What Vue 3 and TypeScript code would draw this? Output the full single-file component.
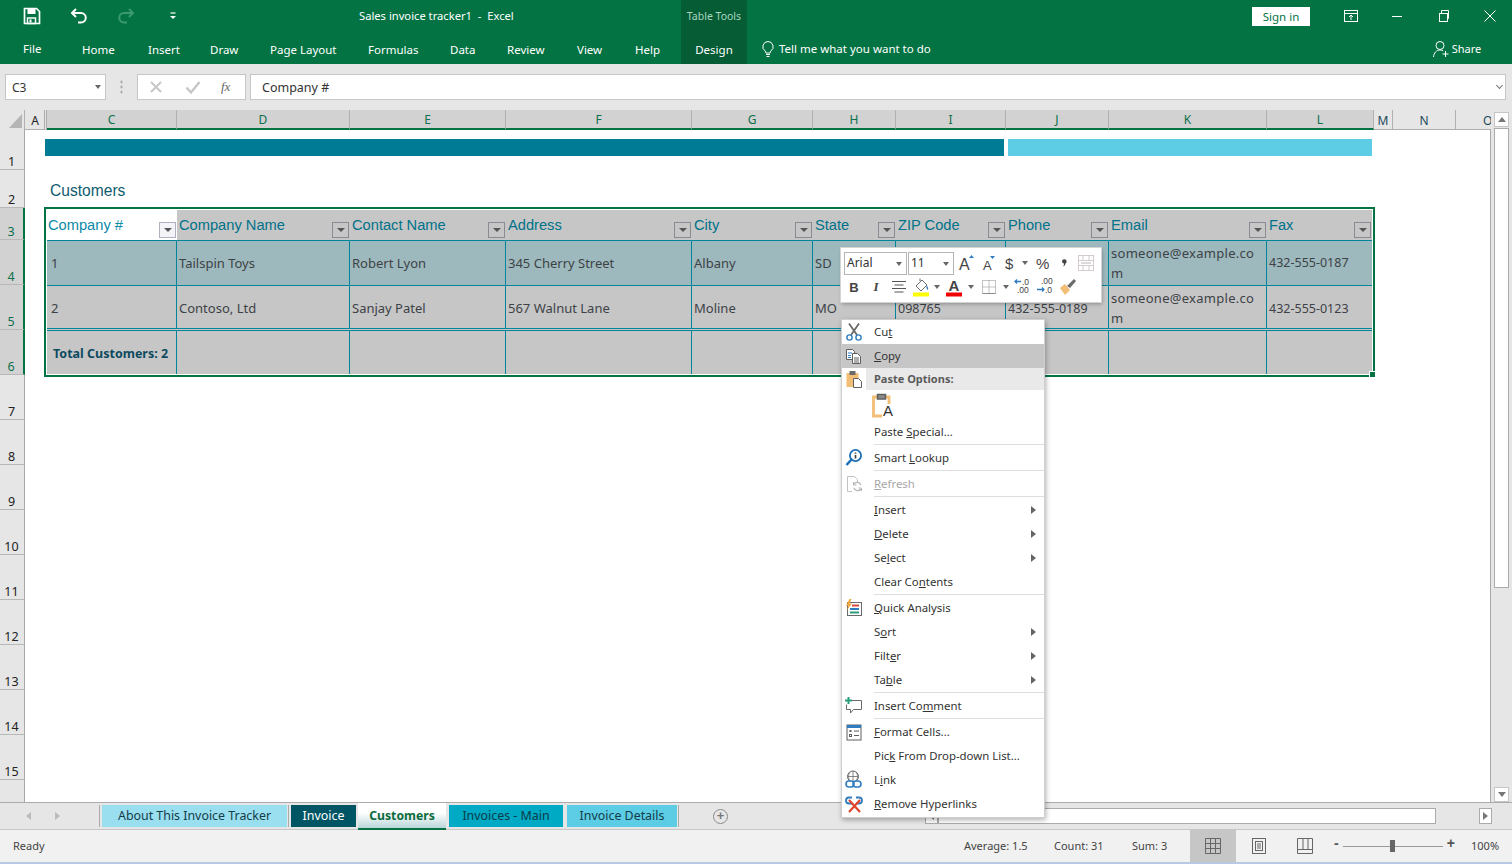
<script setup lang="ts">
type MenuEntry = { kind: "item" | "sep" | "head" | "paste"; t?: string; u?: number; icon?: string; sub?: boolean; on?: boolean; off?: boolean };

const ribbonTabs = [
  { name: "Home", w: 66 }, { name: "Insert", w: 62 }, { name: "Draw", w: 60 }, { name: "Page Layout", w: 98 },
  { name: "Formulas", w: 82 }, { name: "Data", w: 57 }, { name: "Review", w: 70 }, { name: "View", w: 58 }, { name: "Help", w: 46 },
];

const columns = [
  { name: "C", w: 130, on: true },
  { name: "D", w: 173, on: true },
  { name: "E", w: 156, on: true },
  { name: "F", w: 186, on: true },
  { name: "G", w: 121, on: true },
  { name: "H", w: 83, on: true },
  { name: "I", w: 110, on: true },
  { name: "J", w: 103, on: true },
  { name: "K", w: 158, on: true },
  { name: "L", w: 107, on: true },
  { name: "M", w: 19, on: false },
  { name: "N", w: 63, on: false },
];

const rows = [
  { n: 1, h: 40 }, { n: 2, h: 38 }, { n: 3, h: 32, on: true }, { n: 4, h: 45, on: true }, { n: 5, h: 45, on: true },
  { n: 6, h: 45, on: true }, { n: 7, h: 45 }, { n: 8, h: 45 }, { n: 9, h: 45 }, { n: 10, h: 45 }, { n: 11, h: 45 },
  { n: 12, h: 45 }, { n: 13, h: 45 }, { n: 14, h: 45 }, { n: 15, h: 45 },
];

const headers = ["Company #", "Company Name", "Contact Name", "Address", "City", "State", "ZIP Code", "Phone", "Email", "Fax"];
const customers = [
  ["1", "Tailspin Toys", "Robert Lyon", "345 Cherry Street", "Albany", "SD", "", "", "someone@example.co\nm", "432-555-0187"],
  ["2", "Contoso, Ltd", "Sanjay Patel", "567 Walnut Lane", "Moline", "MO", "098765", "432-555-0189", "someone@example.co\nm", "432-555-0123"],
];

const menu: MenuEntry[] = [
  { kind: "item", t: "Cut", u: 2, icon: "cut" },
  { kind: "item", t: "Copy", u: 0, icon: "copy", on: true },
  { kind: "head", t: "Paste Options:", icon: "paste" },
  { kind: "paste" },
  { kind: "item", t: "Paste Special...", u: 6 },
  { kind: "sep" },
  { kind: "item", t: "Smart Lookup", u: 6, icon: "lookup" },
  { kind: "sep" },
  { kind: "item", t: "Refresh", u: 0, icon: "refresh", off: true },
  { kind: "sep" },
  { kind: "item", t: "Insert", u: 0, sub: true },
  { kind: "item", t: "Delete", u: 0, sub: true },
  { kind: "item", t: "Select", u: 2, sub: true },
  { kind: "item", t: "Clear Contents", u: 8 },
  { kind: "sep" },
  { kind: "item", t: "Quick Analysis", u: 0, icon: "quick" },
  { kind: "item", t: "Sort", u: 1, sub: true },
  { kind: "item", t: "Filter", u: 4, sub: true },
  { kind: "item", t: "Table", u: 2, sub: true },
  { kind: "sep" },
  { kind: "item", t: "Insert Comment", u: 9, icon: "comment" },
  { kind: "sep" },
  { kind: "item", t: "Format Cells...", u: 0, icon: "format" },
  { kind: "item", t: "Pick From Drop-down List...", u: 3 },
  { kind: "item", t: "Link", u: 1, icon: "link" },
  { kind: "item", t: "Remove Hyperlinks", u: 0, icon: "unlink" },
];

const sheets = [
  { name: "About This Invoice Tracker", w: 185, cls: "s-about" },
  { name: "Invoice", w: 65, cls: "s-invoice" },
  { name: "Customers", w: 88, cls: "s-active" },
  { name: "Invoices - Main", w: 114, cls: "s-main" },
  { name: "Invoice Details", w: 110, cls: "s-details" },
];

const F = 'font-family="Liberation Sans, sans-serif"';
const icons: Record<string, string> = {
  save: '<path d="M2.500 2.500h12l3 3v12h-15z" fill="none" stroke="#fff" stroke-width="1.700"/><rect x="5.500" y="3" width="8" height="5" fill="#fff"/><rect x="5.500" y="12" width="8" height="5.500" fill="none" stroke="#fff" stroke-width="1.500"/><rect x="7.500" y="13.500" width="2" height="3" fill="#fff"/>',
  undo: '<path d="M7 3L3 7l4 4" fill="none" stroke="#fff" stroke-width="2"/><path d="M3.500 7H12a4.500 4.500 0 0 1 0 9.500H9" fill="none" stroke="#fff" stroke-width="2"/>',
  redo: '<path d="M13 3l4 4-4 4" fill="none" stroke="#3c9a6f" stroke-width="2"/><path d="M16.500 7H8a4.500 4.500 0 0 0 0 9.500h3" fill="none" stroke="#3c9a6f" stroke-width="2"/>',
  more: '<path d="M7.500 7h5" stroke="#fff" stroke-width="1.200"/><path d="M7 10h6l-3 3z" fill="#fff"/>',
  display: '<rect x="3.500" y="4.500" width="13" height="11" fill="none" stroke="#fff"/><path d="M3.500 7.500h13" stroke="#fff"/><path d="M10 14V9M8 11l2-2 2 2" fill="none" stroke="#fff"/>',
  min: '<path d="M5 10.500h10" stroke="#fff"/>',
  restore: '<rect x="5.500" y="7.500" width="8" height="8" fill="none" stroke="#fff"/><path d="M7.500 7V4.500h7v8H14" fill="none" stroke="#fff"/>',
  close: '<path d="M4.500 4.500l11 11M15.500 4.500l-11 11" stroke="#fff" stroke-width="1"/>',
  bulb: '<path d="M10 2.500a5.200 5.200 0 0 0-3 9.400c.7.6.9 1.300.9 2.100h4.200c0-.8.2-1.500.9-2.100a5.200 5.200 0 0 0-3-9.400z" fill="none" stroke="#fff"/><path d="M8 15.500h4M8.500 17.500h3" stroke="#fff"/>',
  share: '<circle cx="9" cy="6.500" r="4" fill="none" stroke="#fff"/><path d="M2.500 18c.4-4 2.800-7 6.500-7 1.200 0 2.200.3 3 .8" fill="none" stroke="#fff"/><path d="M14.500 12v6M11.500 15h6" stroke="#fff"/>',
  x: '<path d="M5 5l10 10M15 5L5 15" stroke="#c6c6c6" stroke-width="2"/>',
  check: '<path d="M3.500 10.500l4.500 5L16.500 5" fill="none" stroke="#c6c6c6" stroke-width="2.400"/>',
  corner: '<path d="M13 1v14H0z" fill="#b5b5b5"/>',
  cut: '<path d="M5 1.500l8 11.500M15 1.500L7 13" stroke="#6a6a6a" stroke-width="1.800"/><circle cx="5.500" cy="15.500" r="2.600" fill="none" stroke="#2f7cc0" stroke-width="1.400"/><circle cx="14.500" cy="15.500" r="2.600" fill="none" stroke="#2f7cc0" stroke-width="1.400"/>',
  copy: '<path d="M2.500 3.500h6l2 2v8h-8z" fill="#fff" stroke="#5f5f5f"/><path d="M8.500 7.500h5l3 3v7h-8z" fill="#fff" stroke="#5f5f5f"/><path d="M4 7h4M4 9.500h3M4 11.500h3" stroke="#2f7cc0"/><path d="M10 12h5M10 14h5M10 16h5" stroke="#5f5f5f"/>',
  paste: '<rect x="2.500" y="4" width="12" height="14" fill="#f2bd75"/><rect x="5.500" y="2" width="6" height="4" fill="#6a6a6a"/><path d="M9.500 9.500h5l3 3v6h-8z" fill="#fff" stroke="#5f5f5f"/>',
  lookup: '<circle cx="11.500" cy="7.500" r="5.600" fill="#fff" stroke="#1f6fb5" stroke-width="1.800"/><path d="M7.500 11.500L2.500 17" stroke="#1f6fb5" stroke-width="2.600"/><path d="M11.500 4.500v1.300M11.500 7v3.600" stroke="#3f3f3f" stroke-width="1.600"/>',
  refresh: '<path d="M3.500 2.500h7l3 3v3M8 17.500H3.500v-15" fill="none" stroke="#c2c2c2"/><path d="M17 11a4 4 0 0 0-7-1M10 14a4 4 0 0 0 7 1" fill="none" stroke="#b5b5b5" stroke-width="1.300"/><path d="M9.500 8v3h3M17.500 17v-3h-3" fill="none" stroke="#b5b5b5"/>',
  quick: '<rect x="3.500" y="4.500" width="14" height="13" fill="none" stroke="#6a6a6a"/><rect x="8" y="6.500" width="7" height="2" fill="#d24a3c"/><rect x="6" y="10" width="9" height="2" fill="#2f7cc0"/><rect x="6" y="13.500" width="9" height="2" fill="#2a9d7c"/><path d="M5.500 1L2 7.500h2.500L3 12l5-6.500H5.500L7.500 1z" fill="#f0a83c"/>',
  comment: '<path d="M6.500 4.500h11v9h-8l-3 3.500v-3.500h-4v-5" fill="none" stroke="#6a6a6a"/><path d="M4.500 1v7M1 4.500h7" stroke="#2a9d7c" stroke-width="2"/>',
  format: '<rect x="3" y="3" width="14" height="15" fill="#fff" stroke="#5f5f5f"/><rect x="3" y="3" width="14" height="3" fill="#2f7cc0"/><rect x="5.500" y="8" width="2" height="2" fill="#5f5f5f"/><rect x="5.500" y="12.500" width="2" height="2" fill="none" stroke="#5f5f5f"/><path d="M10 9h5M10 13.500h5" stroke="#5f5f5f"/>',
  link: '<circle cx="9" cy="6.500" r="5.500" fill="#fff" stroke="#6a6a6a"/><path d="M3.500 6.500h11M9 1v11M6 2c-2 3-2 6 0 9M12 2c2 3 2 6 0 9" fill="none" stroke="#6a6a6a" stroke-width=".8"/><rect x="2" y="11" width="8" height="6" rx="3" fill="#fff" stroke="#2f7cc0" stroke-width="1.600"/><rect x="9" y="11" width="8" height="6" rx="3" fill="none" stroke="#2f7cc0" stroke-width="1.600"/>',
  unlink: '<path d="M8 3.500H5a3 3 0 0 0 0 6h3M12 3.500h3a3 3 0 0 1 0 6h-3" fill="none" stroke="#2f7cc0" stroke-width="1.800"/><path d="M5 6l11 12M16 6L5 18" stroke="#e0452c" stroke-width="2.200"/>',
  pasteA: '<path d="M6 4H1.500v19H10" fill="none" stroke="#f2bd75" stroke-width="2.800"/><path d="M13 4h4v7" fill="none" stroke="#f2bd75" stroke-width="2.800"/><rect x="5.500" y="1.500" width="8" height="4.500" fill="#8a8a8a" stroke="#5f5f5f" stroke-width="1.500"/><text x="11" y="23" font-size="15" ' + F + ' fill="#333">A</text>',
  grow: '<text x="3" y="17" font-size="16" ' + F + ' fill="#444">A</text><path d="M13 5h5l-2.500-3z" fill="#2f7cc0"/>',
  shrink: '<text x="4" y="17" font-size="13" ' + F + ' fill="#444">A</text><path d="M11 3h5l-2.500 3z" fill="#2f7cc0"/>',
  dollar: '<text x="5" y="16" font-size="15" ' + F + ' fill="#444">$</text>',
  percent: '<text x="3" y="16" font-size="15" ' + F + ' fill="#444">%</text>',
  comma: '<path d="M8 8.500a2.300 2.300 0 1 1 3.500 2c-.3 1.500-1 2.500-2.300 3 .5-1 .8-1.700.8-3A2.300 2.300 0 0 1 8 8.500z" fill="#444"/>',
  wrap: '<rect x="2.500" y="2.500" width="15" height="15" fill="none" stroke="#d3cbcf"/><path d="M2.500 7.500h15M2.500 12.500h15M7 2.500v5M13 2.500v5M7 12.500v5M13 12.500v5" stroke="#d3cbcf"/><path d="M5 10h10" stroke="#bdb5b9"/>',
  align: '<path d="M3 4.500h14M5.500 8h9M3 11.500h14M5.500 15h9" stroke="#555" stroke-width="1.100"/>',
  fill: '<path d="M5 9l6-6 5 5-6 6z" fill="#fff" stroke="#6a6a6a"/><path d="M9 4V1.500" stroke="#6a6a6a"/><path d="M15.500 8.500c1.500 1 2 3 1.500 4.500-1-.5-2-2-1.500-4.500z" fill="#2f7cc0"/><rect x="2" y="15.500" width="16" height="4" fill="#ffff00"/>',
  color: '<text x="4.500" y="13.500" font-size="15" font-weight="bold" ' + F + ' fill="#444">A</text><rect x="2" y="15.500" width="16" height="4" fill="#f00000"/>',
  borders: '<path d="M3.500 3.500h13v13h-13zM10 3.500v13M3.500 10h13" fill="none" stroke="#8a8a8a" stroke-dasharray="1 1"/><path d="M3.500 16.500h13" stroke="#8a8a8a"/>',
  decUp: '<path d="M9 4.500H3M5 2.500l-2 2 2 2" fill="none" stroke="#2f7cc0" stroke-width="1.300"/><text x="10" y="8" font-size="8.500" ' + F + ' fill="#444">.0</text><text x="5" y="16" font-size="8.500" ' + F + ' fill="#444">.00</text>',
  decDown: '<text x="6" y="7" font-size="8.500" ' + F + ' fill="#444">.00</text><path d="M2 12.500h7M7 10.500l2 2-2 2" fill="none" stroke="#2f7cc0" stroke-width="1.300"/><text x="10" y="16" font-size="8.500" ' + F + ' fill="#444">.0</text>',
  brush: '<path d="M2 11l5 7 5-5-5-6z" fill="#f2bd75"/><path d="M9 9l7-7 2 2-6 7z" fill="#6a6a6a"/>',
  viewNormal: '<path d="M2.500 2.500h15v15h-15zM7.500 2.500v15M12.500 2.500v15M2.500 7.500h15M2.500 12.500h15" fill="none" stroke="#666"/>',
  viewPage: '<rect x="3.500" y="2.500" width="13" height="15" fill="none" stroke="#666"/><rect x="6.500" y="5.500" width="7" height="9" fill="none" stroke="#666"/><path d="M8 8h4M8 10h4M8 12h4" stroke="#666"/>',
  viewBreak: '<path d="M2.500 2.500h15v15h-15zM2.500 13.500h15M8 2.500v11M13 2.500v11" fill="none" stroke="#666"/>',
};

const barTop = [
  { icon: "grow", w: 24 }, { icon: "shrink", w: 22 }, { icon: "dollar", w: 20 }, { w: 10 },
  { icon: "percent", w: 26 }, { icon: "comma", w: 16 }, { icon: "wrap", w: 28 },
];
const barBottom = [
  { text: "B", w: 20 }, { text: "I", w: 24 }, { icon: "align", w: 22 }, { icon: "fill", w: 22 }, { w: 10 },
  { icon: "color", w: 24 }, { w: 10 }, { icon: "borders", w: 25 }, { w: 9 }, { icon: "decUp", w: 24 },
  { icon: "decDown", w: 22 }, { icon: "brush", w: 24 },
];

function before(e: MenuEntry) {
  return e.u === undefined ? e.t : e.t!.slice(0, e.u);
}
function after(e: MenuEntry) {
  return e.u === undefined ? "" : e.t!.slice(e.u + 1);
}
</script>

<template>
  <div class="app">
    <header class="ribbon">
      <div class="titlebar">
        <div class="qat">
          <svg class="ic" viewBox="0 0 20 20" v-html="icons.save"></svg>
          <svg class="ic" viewBox="0 0 20 20" v-html="icons.undo"></svg>
          <svg class="ic" viewBox="0 0 20 20" v-html="icons.redo"></svg>
          <svg class="ic" viewBox="0 0 20 20" v-html="icons.more"></svg>
        </div>
        <div class="doc">Sales invoice tracker1&nbsp; - &nbsp;Excel</div>
      </div>
      <div class="context">Table Tools</div>
      <div class="winbar">
        <button class="signin">Sign in</button>
        <svg class="ic" viewBox="0 0 20 20" v-html="icons.display"></svg>
        <svg class="ic" viewBox="0 0 20 20" v-html="icons.min"></svg>
        <svg class="ic" viewBox="0 0 20 20" v-html="icons.restore"></svg>
        <svg class="ic" viewBox="0 0 20 20" v-html="icons.close"></svg>
      </div>
      <nav class="tabs">
        <span class="file">File</span>
        <span v-for="t in ribbonTabs" :key="t.name" :style="{ width: t.w + 'px' }">{{ t.name }}</span>
      </nav>
      <div class="design">Design</div>
      <div class="tell">
        <svg class="ic" viewBox="0 0 20 20" v-html="icons.bulb"></svg>
        <span>Tell me what you want to do</span>
        <svg class="ic share" viewBox="0 0 20 20" v-html="icons.share"></svg>
        <span class="sharetxt">Share</span>
      </div>
    </header>

    <section class="formula">
      <div class="namebox">C3<i class="caret"></i></div>
      <div class="grip"></div>
      <div class="fbtns">
        <svg class="ic" viewBox="0 0 20 20" v-html="icons.x"></svg>
        <svg class="ic" viewBox="0 0 20 20" v-html="icons.check"></svg>
        <em>fx</em>
      </div>
      <div class="finput">Company #<span class="chev"></span></div>
    </section>

    <section class="sheet">
      <div class="main">
        <div class="colhead">
          <div class="corner"><svg viewBox="0 0 13 15" v-html="icons.corner"></svg></div>
          <div class="col cola">A</div>
          <div v-for="c in columns" :key="c.name" class="col" :class="{ on: c.on }" :style="{ width: c.w + 'px' }">{{ c.name }}</div>
          <div class="col clip">O</div>
        </div>
        <div class="body">
          <div class="rowhead">
            <div v-for="r in rows" :key="r.n" class="rw" :class="{ on: r.on }" :style="{ height: r.h + 'px' }">{{ r.n }}</div>
            <div class="rw rest"></div>
          </div>
          <div class="canvas">
            <div class="banner"><div class="dark"></div><div class="light"></div></div>
            <div class="heading">Customers</div>
            <div class="table">
              <div class="tr thead">
                <div v-for="(h, i) in headers" :key="h" class="th" :class="{ active: i === 0 }">{{ h }}<span class="filter"></span></div>
              </div>
              <div v-for="(row, ri) in customers" :key="ri" class="tr" :class="ri === 0 ? 'r1' : 'r2'">
                <div v-for="(v, i) in row" :key="i" class="td" :class="{ first: i === 0, num: i === 6 || i === 7 || i === 9, mail: i === 8 }">{{ v }}</div>
              </div>
              <div class="tr total">
                <div class="td totaltxt">Total Customers: 2</div>
                <div v-for="i in 9" :key="i" class="td"></div>
              </div>
              <span class="handle"></span>
            </div>
          </div>
        </div>
      </div>
      <div class="vscroll">
        <div class="sbtn"><i class="tri up"></i></div>
        <div class="thumb"></div>
        <div class="sbtn"><i class="tri down"></i></div>
      </div>
    </section>

    <section class="sheettabs">
      <div class="nav"><i class="tri left"></i><i class="tri right"></i></div>
      <div v-for="s in sheets" :key="s.name" class="stab" :class="s.cls" :style="{ width: s.w + 'px' }">{{ s.name }}</div>
      <div class="plus">+</div>
      <div class="hscroll">
        <div class="hb"><i class="tri left"></i></div>
        <div class="hthumb"></div>
        <div class="hb end"><i class="tri right"></i></div>
      </div>
    </section>

    <footer class="status">
      <span class="ready">Ready</span>
      <span class="stat s1">Average: 1.5</span>
      <span class="stat s2">Count: 31</span>
      <span class="stat s3">Sum: 3</span>
      <div class="vb on"><svg class="ic" viewBox="0 0 20 20" v-html="icons.viewNormal"></svg></div>
      <div class="vb"><svg class="ic" viewBox="0 0 20 20" v-html="icons.viewPage"></svg></div>
      <div class="vb"><svg class="ic" viewBox="0 0 20 20" v-html="icons.viewBreak"></svg></div>
      <div class="zoom">
        <b>-</b>
        <div class="track"><i></i></div>
        <b>+</b>
      </div>
      <span class="pct">100%</span>
    </footer>

    <div class="minibar">
      <div class="barrow">
        <div class="combo font">Arial<i class="caret"></i></div>
        <div class="combo size">11<i class="caret"></i></div>
        <div v-for="(b, i) in barTop" :key="i" class="slot" :style="{ width: b.w + 'px' }">
          <svg v-if="b.icon" class="ic" viewBox="0 0 20 20" v-html="icons[b.icon]"></svg>
          <i v-else class="caret"></i>
        </div>
      </div>
      <div class="barrow second">
        <div v-for="(b, i) in barBottom" :key="i" class="slot" :style="{ width: b.w + 'px' }">
          <svg v-if="b.icon" class="ic" viewBox="0 0 20 20" v-html="icons[b.icon]"></svg>
          <span v-else-if="b.text" class="fmt" :class="b.text">{{ b.text }}</span>
          <i v-else class="caret"></i>
        </div>
      </div>
    </div>

    <div class="menu">
      <template v-for="(e, i) in menu" :key="i">
        <div v-if="e.kind === 'sep'" class="sep"></div>
        <div v-else-if="e.kind === 'paste'" class="pasterow">
          <svg viewBox="0 0 22 25" width="22" height="25" v-html="icons.pasteA"></svg>
        </div>
        <div v-else class="item" :class="{ on: e.on, off: e.off, head: e.kind === 'head' }">
          <span class="mi"><svg v-if="e.icon" class="ic" viewBox="0 0 20 20" v-html="icons[e.icon]"></svg></span>
          <span class="ml">{{ before(e) }}<u v-if="e.u !== undefined">{{ e.t![e.u] }}</u>{{ after(e) }}</span>
          <i v-if="e.sub" class="tri right"></i>
        </div>
      </template>
    </div>
  </div>
</template>

<style scoped>
.app {
  --tcols: 130px 173px 156px 186px 121px 83px 110px 103px 158px 105px;
  position: relative;
  width: 1512px;
  height: 864px;
  overflow: hidden;
  display: flex;
  flex-direction: column;
  background: #e6e6e6;
  font-family: "Noto Sans", sans-serif;
  font-size: 12px;
  color: #333;
}
.ic {
  width: 20px;
  height: 20px;
  flex: none;
  overflow: visible;
}
.ribbon {
  display: grid;
  grid-template-columns: 681px 66px 1fr;
  grid-template-rows: 32px 32px;
  height: 64px;
  background: #037343;
  color: #fff;
}
.titlebar {
  display: flex;
  align-items: center;
}
.qat {
  display: flex;
  gap: 27px;
  padding-left: 22px;
  width: 359px;
  box-sizing: border-box;
}
.doc {
  font-size: 11.200px;
  margin-top: -2px;
}
.context {
  background: #055c35;
  color: #a9d6bf;
  font-size: 10.500px;
  display: flex;
  align-items: center;
  justify-content: center;
}
.winbar {
  display: flex;
  align-items: center;
  padding-left: 505px;
  gap: 26.500px;
}
.signin {
  width: 58px;
  height: 19px;
  border: 0;
  padding: 0;
  background: #fff;
  color: #037343;
  font: 11.500px "Noto Sans", sans-serif;
  margin-right: 4px;
}
.tabs {
  display: flex;
  align-items: center;
  padding-left: 23px;
  padding-top: 3px;
  font-size: 11.500px;
  white-space: nowrap;
}
.file {
  width: 59px;
  margin-top: -2px;
}
.design {
  background: #055c35;
  display: flex;
  align-items: center;
  justify-content: center;
  padding-top: 3px;
  font-size: 11.500px;
}
.tell {
  display: flex;
  align-items: center;
  padding-left: 11px;
  padding-top: 1px;
  font-size: 11.500px;
}
.tell span:first-of-type {
  margin-left: 1px;
}
.share {
  margin-left: 500px;
  margin-right: 1px;
}
.sharetxt {
  font-size: 11px;
}
.formula {
  display: flex;
  height: 46px;
  padding: 10px 6px 10px 5px;
  box-sizing: border-box;
  align-items: stretch;
}
.namebox,
.fbtns,
.finput {
  background: #fff;
  border: 1px solid #c6c6c6;
  box-sizing: border-box;
  display: flex;
  align-items: center;
  position: relative;
}
.namebox {
  width: 101px;
  padding-left: 6px;
}
.namebox .caret {
  position: absolute;
  right: 4px;
  top: 10px;
}
.grip {
  width: 31px;
  background: radial-gradient(circle, #aaa 1px, transparent 1.300px) center / 3px 5px repeat-y;
  margin: 6px 0;
}
.fbtns {
  width: 109px;
  padding-left: 8px;
  gap: 16.500px;
}
.fbtns em {
  font: italic 13px "Liberation Serif", serif;
  color: #666;
  margin-left: 2px;
}
.finput {
  margin-left: 4px;
  flex: 1;
  padding-left: 11px;
  font-size: 12.500px;
}
.chev {
  position: absolute;
  right: 3px;
  top: 8px;
  width: 4px;
  height: 4px;
  border-right: 1.500px solid #777;
  border-bottom: 1.500px solid #777;
  transform: rotate(45deg);
}
.caret {
  display: inline-block;
  border-left: 3.500px solid transparent;
  border-right: 3.500px solid transparent;
  border-top: 4px solid #666;
}
.tri {
  display: block;
  width: 0;
  height: 0;
  border: 4px solid transparent;
}
.tri.up {
  border-top: 0;
  border-bottom: 5px solid #777;
}
.tri.down {
  border-bottom: 0;
  border-top: 5px solid #777;
}
.tri.left {
  border-left: 0;
  border-right: 5px solid #bbb;
}
.tri.right {
  border-right: 0;
  border-left: 5px solid #bbb;
}
.sheet {
  display: flex;
  height: 692px;
}
.main {
  width: 1491px;
  display: flex;
  flex-direction: column;
}
.colhead {
  display: flex;
  height: 20px;
  box-sizing: border-box;
  font-size: 12px;
  overflow: hidden;
}
.corner {
  width: 25px;
  flex: none;
  border-right: 1px solid #b0b0b0;
  box-sizing: border-box;
  padding: 3px 0 0 9px;
}
.corner svg {
  width: 13px;
  height: 15px;
  display: block;
}
.col {
  flex: none;
  box-sizing: border-box;
  border-right: 1px solid #b0b0b0;
  text-align: center;
  line-height: 21px;
  color: #1d4a5a;
  border-bottom: 1px solid #b0b0b0;
}
.col.on {
  background: #d2d2d2;
  color: #0d6f4b;
  border-bottom: 2px solid #037343;
  line-height: 20px;
}
.cola {
  width: 22px;
  border-right: 3px double #aaa;
  color: #222;
  padding-left: 1px;
}
.clip {
  flex: 1;
  border-right: 0;
  text-align: left;
  padding-left: 27px;
  overflow: hidden;
}
.body {
  display: flex;
  height: 672px;
}
.rowhead {
  width: 25px;
  flex: none;
  display: flex;
  flex-direction: column;
  box-sizing: border-box;
}
.rw {
  box-sizing: border-box;
  display: flex;
  align-items: flex-end;
  justify-content: center;
  padding: 0 1px 0 0;
  border-bottom: 1px solid #b8b8b8;
  border-right: 1px solid #a8a8a8;
  font-size: 12.500px;
  line-height: 14px;
  color: #222;
}
.rw.on {
  background: #d2d2d2;
  color: #0d6f4b;
  border-right: 2px solid #037343;
}
.rw.rest {
  flex: 1;
  border-bottom: 0;
}
.canvas {
  flex: 1;
  background: #fff;
  border-right: 1px solid #a8a8a8;
  overflow: hidden;
}
.banner {
  display: flex;
  gap: 4px;
  margin: 9px 0 0 20px;
  height: 17px;
}
.dark {
  width: 959px;
  background: #007b95;
}
.light {
  width: 364px;
  background: #5ccde4;
}
.heading {
  height: 51px;
  box-sizing: border-box;
  padding: 26px 0 0 25px;
  font: 15.600px/18px "Liberation Sans", sans-serif;
  color: #0f5b70;
}
.table {
  position: relative;
  margin-left: 19px;
  width: 1331px;
  box-sizing: border-box;
  border: 2px solid #037343;
  padding: 1px;
  background: #fff;
}
.tr {
  display: grid;
  grid-template-columns: var(--tcols);
}
.thead {
  height: 31px;
  border-bottom: 1px solid #00859b;
  box-sizing: border-box;
  background: #c6c6c6;
}
.th {
  position: relative;
  padding: 6px 0 0 2px;
  font: 14.670px/18px "Liberation Sans", sans-serif;
  color: #00728a;
}
.th.active {
  background: #fff;
  color: #0b8aa8;
  padding-left: 1px;
}
.filter {
  position: absolute;
  right: 1px;
  bottom: 2px;
  width: 17px;
  height: 16px;
  box-sizing: border-box;
  border: 1px solid #8a8a92;
  background: #c6c6c6;
}
.filter::after {
  content: "";
  position: absolute;
  left: 4px;
  top: 5px;
  border-left: 4px solid transparent;
  border-right: 4px solid transparent;
  border-top: 4px solid #555;
}
.active .filter {
  background: #f3f3f8;
  border-color: #b0b0c0;
}
.r1 {
  height: 45px;
  background: #9db9bd;
  border-bottom: 1px solid #00859b;
  box-sizing: border-box;
}
.r2 {
  height: 45px;
  background: #c6c6c6;
  border-bottom: 3px double #00859b;
  box-sizing: border-box;
}
.r2 .td {
  padding-top: 2px;
}
.r2 .td.num {
  padding-top: 3px;
}
.total {
  height: 43px;
  background: #c6c6c6;
}
.td {
  display: flex;
  align-items: center;
  box-sizing: border-box;
  padding-left: 2px;
  border-right: 1px solid #00859b;
  font-size: 13px;
  line-height: 20px;
  white-space: pre-line;
  color: #3d4247;
}
.td:last-child {
  border-right: 0;
}
.td.first {
  padding-left: 4px;
}
.td.num {
  font-size: 12.500px;
}
.td.mail {
  letter-spacing: 0.280px;
}
.td.totaltxt {
  padding: 2px 0 0 6px;
  font-size: 12.500px;
  font-weight: 700;
  color: #0d4a5f;
}
.handle {
  position: absolute;
  right: -3px;
  bottom: -3px;
  width: 5px;
  height: 5px;
  background: #037343;
  border: 1px solid #fff;
}
.vscroll {
  flex: 1;
  display: flex;
  flex-direction: column;
  box-sizing: border-box;
  padding: 2px 3px 0 3px;
}
.sbtn {
  height: 15px;
  flex: none;
  background: #fff;
  border: 1px solid #c6c6c6;
  box-sizing: border-box;
  display: flex;
  align-items: center;
  justify-content: center;
}
.thumb {
  height: 461px;
  margin: 1px 0 199px;
  background: #fff;
  border: 1px solid #ababab;
  box-sizing: border-box;
}
.sheettabs {
  display: flex;
  align-items: center;
  height: 28px;
  border-top: 1px solid #ababab;
  border-bottom: 1px solid #c6c6c6;
  box-sizing: border-box;
  font-size: 12.400px;
  position: relative;
}
.nav {
  width: 100px;
  height: 22px;
  display: flex;
  align-items: center;
  gap: 24px;
  padding-left: 26px;
  box-sizing: border-box;
  border-right: 1px solid #ababab;
  margin-right: 2px;
}
.stab {
  position: relative;
  height: 22px;
  line-height: 21px;
  text-align: center;
  margin-right: 4px;
  flex: none;
}
.s-about {
  background: #9adfef;
  color: #123c4a;
}
.s-about::after,
.s-details::after {
  content: "";
  position: absolute;
  right: -2px;
  top: 0;
  width: 1px;
  height: 22px;
  background: #ababab;
}
.s-invoice {
  background: #005565;
  color: #fff;
  margin-right: 2px;
}
.s-active {
  height: 27px;
  line-height: 25px;
  margin-right: 3px;
  background: linear-gradient(#fff 40%, #b9d6da);
  border-bottom: 2px solid #037343;
  box-sizing: border-box;
  color: #0a6b3c;
  font-weight: 700;
  font-size: 12.200px;
}
.s-main {
  background: #00a9c4;
  color: #0b3b4a;
}
.s-details {
  background: #5ccde4;
  color: #123c4a;
}
.plus {
  width: 15px;
  height: 15px;
  margin-left: 32px;
  box-sizing: border-box;
  border: 1.500px solid #8a8a8a;
  border-radius: 50%;
  color: #777;
  font: 700 13px/12px "Liberation Sans", sans-serif;
  text-align: center;
}
.hscroll {
  position: absolute;
  left: 925px;
  top: 5px;
  width: 567px;
  height: 16px;
  display: flex;
}
.hb {
  width: 13px;
  background: #fff;
  border: 1px solid #ababab;
  box-sizing: border-box;
  display: flex;
  align-items: center;
  justify-content: center;
}
.hb .tri.left,
.hb .tri.right {
  border-left-color: #777;
  border-right-color: #777;
  border-top-width: 4px;
}
.hb .tri.left {
  border-left: 0;
}
.hb .tri.right {
  border-right: 0;
}
.hthumb {
  width: 498px;
  background: #fff;
  border: 1px solid #ababab;
  box-sizing: border-box;
}
.hb.end {
  margin-left: auto;
}
.status {
  display: flex;
  align-items: center;
  height: 32px;
  background: #f1f1f1;
  font-size: 11px;
  color: #444;
  border-bottom: 2px solid #b9c9e2;
  box-sizing: content-box;
}
.status > span {
  margin-top: -2px;
}
.ready {
  padding-left: 13px;
  width: 964px;
  box-sizing: border-box;
}
.stat {
  flex: none;
}
.s1 {
  width: 90px;
}
.s2 {
  width: 78px;
}
.s3 {
  width: 58px;
}
.vb {
  width: 46px;
  height: 32px;
  display: flex;
  align-items: center;
  justify-content: center;
}
.vb.on {
  background: #c6c6c6;
}
.zoom {
  display: flex;
  align-items: center;
  width: 131px;
  margin-left: -1px;
  padding-left: 7px;
  box-sizing: border-box;
}
.zoom b {
  font: 700 14px/10px "Liberation Sans", sans-serif;
  color: #555;
  margin-top: -6px;
}
.track {
  position: relative;
  width: 100px;
  height: 1px;
  background: #999;
  margin: 0 4px;
}
.track i {
  position: absolute;
  left: 47px;
  top: -6px;
  width: 5px;
  height: 12px;
  background: #666;
}
.pct {
  padding-left: 13px;
}
.minibar {
  position: absolute;
  left: 841px;
  top: 248px;
  width: 260px;
  height: 54px;
  box-sizing: border-box;
  padding: 3px;
  background: #fff;
  box-shadow: 0 0 0 1px #d4d4d4, 1px 2px 4px rgba(0, 0, 0, 0.3);
}
.barrow {
  display: flex;
  align-items: center;
  height: 24px;
}
.second {
  height: 24px;
}
.combo {
  position: relative;
  height: 23px;
  box-sizing: border-box;
  border: 1px solid #b5b5b5;
  padding-left: 2px;
  line-height: 19px;
  flex: none;
}
.combo .caret {
  position: absolute;
  right: 4px;
  top: 9px;
}
.font {
  width: 63px;
  margin-right: 1px;
}
.size {
  width: 46px;
}
.slot {
  height: 22px;
  flex: none;
  display: flex;
  align-items: center;
  justify-content: center;
}
.fmt {
  font: 700 13px "Liberation Sans", sans-serif;
  color: #444;
}
.fmt.I {
  font: italic 700 13px "Liberation Serif", serif;
}
.menu {
  position: absolute;
  left: 841px;
  top: 319px;
  width: 204px;
  height: 499px;
  box-sizing: border-box;
  border: 1px solid #cfcfcf;
  background: #fff;
  box-shadow: 1px 2px 5px rgba(0, 0, 0, 0.3);
}
.item {
  display: flex;
  align-items: center;
  height: 24px;
}
.item.on {
  background: #c6c6c6;
}
.item.off .ml {
  color: #a8a8a8;
}
.item.head {
  height: 22px;
}
.mi {
  width: 24px;
  flex: none;
  display: flex;
  justify-content: center;
}
.ml {
  flex: 1;
  padding-left: 8px;
  line-height: 22px;
  font-size: 11.400px;
  white-space: nowrap;
}
.head .ml {
  background: #e9e9e9;
  font-size: 11px;
  font-weight: 700;
  color: #5a5a5a;
}
.item .tri.right {
  border-left-color: #666;
  margin-right: 8px;
}
.pasterow {
  height: 30px;
  padding-left: 30px;
  padding-top: 3px;
  box-sizing: border-box;
}
.sep {
  height: 2px;
  margin-left: 32px;
  background: linear-gradient(#dedede 50%, #fff 50%);
}
</style>

<style>
html,
body {
  margin: 0;
  background: #fff;
}
</style>
